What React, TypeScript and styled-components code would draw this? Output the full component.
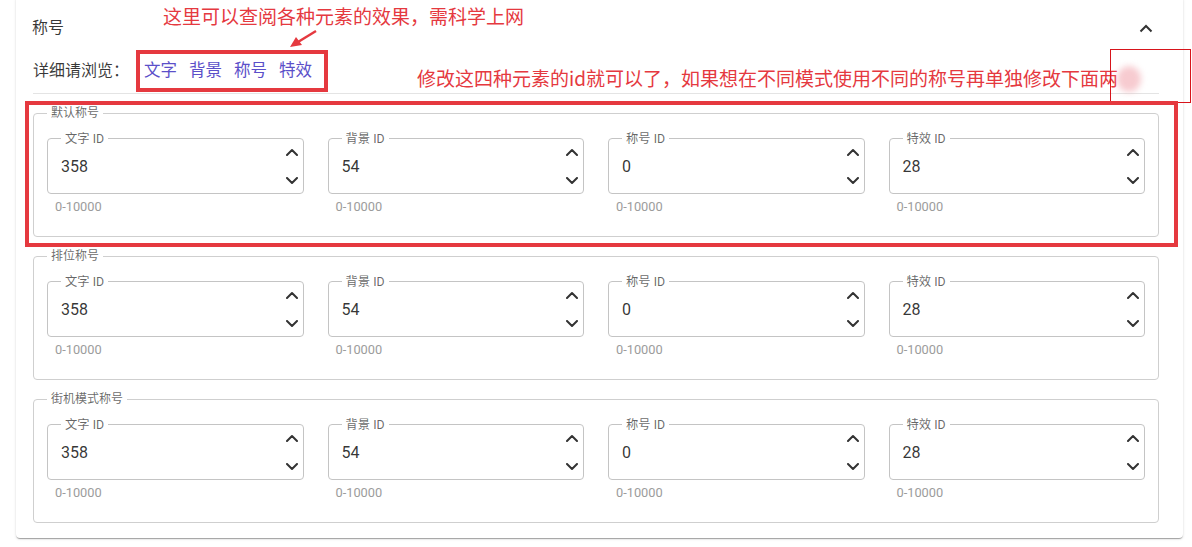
import React from "react";
import styled, { createGlobalStyle } from "styled-components";

const Global = createGlobalStyle`
  html, body { margin: 0; padding: 0; background: #ffffff; }
  body { font-family: Roboto, "Noto Sans CJK SC", "Noto Sans", sans-serif; color: rgba(0,0,0,0.87); }
  #root { position: relative; width: 1192px; height: 547px; overflow: hidden; }
`;

const Page = styled.div`
  position: relative;
  width: 1192px;
  height: 547px;
  overflow: hidden;
  background: #fff;
`;

const Card = styled.section`
  margin: -2px 9px 0 16px;
  background: #fff;
  border-radius: 0 0 4px 4px;
  box-shadow: 0 2px 1px -1px rgba(0,0,0,0.2), 0 1px 1px 0 rgba(0,0,0,0.14), 0 1px 3px 0 rgba(0,0,0,0.12);
`;

const Summary = styled.div`
  height: 60px;
  display: flex;
  align-items: center;
  justify-content: space-between;
  padding: 0 30px 0 16px;
`;

const Title = styled.span`
  font-size: 16px;
  line-height: 24px;
  color: rgba(0,0,0,0.78);
`;

const Details = styled.div`
  padding: 0 24px 15px 17px;
`;

const BrowseRow = styled.div`
  display: flex;
  align-items: center;
  height: 22px;
  font-size: 16px;
  color: rgba(0,0,0,0.78);
`;

const Links = styled.div`
  display: flex;
  gap: 12px;
  margin-left: 15px;
`;

const Link = styled.a`
  color: #5b4fc9;
  text-decoration: none;
  font-size: 16.5px;
`;

const Divider = styled.hr`
  margin: 13px 0 0 0;
  border: none;
  border-top: 1px solid #e4e4e4;
`;

const Groups = styled.div`
  display: flex;
  flex-direction: column;
  gap: 11px;
  margin-top: 11px;
`;

const Group = styled.fieldset`
  margin: 0;
  padding: 17px 13px 19px 13px;
  border: 1px solid #cfcfcf;
  border-radius: 4px;
  min-width: 0;
`;

const GroupLegend = styled.legend`
  padding: 0 4px;
  font-size: 12px;
  line-height: 16px;
  color: rgba(0,0,0,0.6);
`;

const Row = styled.div`
  display: grid;
  grid-template-columns: repeat(4, 1fr);
  gap: 24px;
`;

const Field = styled.div`
  display: flex;
  flex-direction: column;
`;

const InputBox = styled.div`
  position: relative;
  height: 56px;
  box-sizing: border-box;
  border: 1px solid #c4c4c4;
  border-radius: 4px;
  display: flex;
  align-items: center;
`;

const FloatLabel = styled.span`
  position: absolute;
  top: -8px;
  left: 13px;
  padding: 0 4px;
  background: #fff;
  font-size: 12.3px;
  line-height: 16px;
  color: rgba(0,0,0,0.6);
`;

const Value = styled.span`
  flex: 1;
  padding-left: 13px;
  font-size: 16px;
  color: rgba(0,0,0,0.8);
`;

const Spinner = styled.div`
  align-self: stretch;
  display: flex;
  flex-direction: column;
  justify-content: space-between;
  padding: 9px 5px 8px 0;
`;

const Helper = styled.span`
  margin: 3px 0 0 8px;
  font-size: 12.8px;
  line-height: 20px;
  color: #9c9c9c;
`;

const Note = styled.div<{ $x: number; $y: number }>`
  position: absolute;
  left: ${(p) => p.$x}px;
  top: ${(p) => p.$y}px;
  font-family: "Noto Sans CJK SC", "Noto Sans", sans-serif;
  font-size: 19px;
  line-height: 24px;
  color: #e5393f;
  white-space: nowrap;
`;

const Frame = styled.div<{ $x: number; $y: number; $w: number; $h: number; $b: number; $c: string }>`
  position: absolute;
  left: ${(p) => p.$x}px;
  top: ${(p) => p.$y}px;
  width: ${(p) => p.$w}px;
  height: ${(p) => p.$h}px;
  box-sizing: border-box;
  border: ${(p) => p.$b}px solid ${(p) => p.$c};
  pointer-events: none;
`;

const Blob = styled.div`
  position: absolute;
  left: 1117px;
  top: 66px;
  width: 24px;
  height: 26px;
  border-radius: 50%;
  background: rgba(240, 160, 170, 0.55);
  filter: blur(3px);
`;

const ArrowSvg = styled.svg`
  position: absolute;
  left: 286px;
  top: 28px;
`;

const Chevron = ({ up }: { up?: boolean }) => (
  <svg width="12" height="8" viewBox="0 0 12 8">
    <polyline
      points={up ? "1,7 6,2 11,7" : "1,1 6,6 11,1"}
      fill="none"
      stroke="#333"
      strokeWidth="2"
      strokeLinecap="round"
      strokeLinejoin="round"
    />
  </svg>
);

const fields = [
  { label: "文字 ID", value: "358" },
  { label: "背景 ID", value: "54" },
  { label: "称号 ID", value: "0" },
  { label: "特效 ID", value: "28" },
];

const groups = ["默认称号", "排位称号", "街机模式称号"];

export default function App() {
  return (
    <Page>
      <Global />
      <Card>
        <Summary>
          <Title>称号</Title>
          <svg width="14" height="9" viewBox="0 0 14 9">
            <polyline points="1.5,7.5 7,2 12.5,7.5" fill="none" stroke="#333" strokeWidth="2" />
          </svg>
        </Summary>
        <Details>
          <BrowseRow>
            <span>详细请浏览：</span>
            <Links>
              <Link href="#">文字</Link>
              <Link href="#">背景</Link>
              <Link href="#">称号</Link>
              <Link href="#">特效</Link>
            </Links>
          </BrowseRow>
          <Divider />
          <Groups>
            {groups.map((g) => (
              <Group key={g}>
                <GroupLegend>{g}</GroupLegend>
                <Row>
                  {fields.map((f) => (
                    <Field key={f.label}>
                      <InputBox>
                        <FloatLabel>{f.label}</FloatLabel>
                        <Value>{f.value}</Value>
                        <Spinner>
                          <Chevron up />
                          <Chevron />
                        </Spinner>
                      </InputBox>
                      <Helper>0-10000</Helper>
                    </Field>
                  ))}
                </Row>
              </Group>
            ))}
          </Groups>
        </Details>
      </Card>

      <Note $x={163} $y={4}>这里可以查阅各种元素的效果，需科学上网</Note>
      <ArrowSvg width="34" height="24" viewBox="0 0 34 24">
        <line x1="30" y1="3" x2="12" y2="14" stroke="#e5393f" strokeWidth="2.5" />
        <polygon points="4,19 10,9 16,17" fill="#e5393f" />
      </ArrowSvg>
      <Note $x={417} $y={66}>
        修改这四种元素的id就可以了，如果想在不同模式使用不同的称号再单独修改下面两
      </Note>
      <Blob />
      <Frame $x={1110} $y={49} $w={81} $h={54} $b={1.5} $c="#d7141b" />
      <Frame $x={136} $y={50} $w={192} $h={42} $b={4} $c="#e5393f" />
      <Frame $x={25} $y={101} $w={1153} $h={146} $b={4} $c="#e5393f" />
    </Page>
  );
}
